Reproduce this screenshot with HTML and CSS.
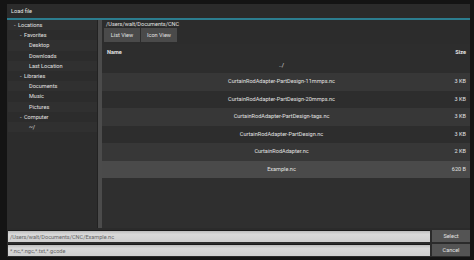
FILE: index.html
```html
<!DOCTYPE html>
<html>
<head>
<meta charset="utf-8">
<link rel="stylesheet" href="styles.css">
</head>
<body>
<div class="dialog">
  <div class="title">Load file</div>
  <div class="rule"></div>
  <div class="main">
    <div class="tree">
      <div class="node l0 odd"><span class="tog">-</span>Locations</div>
      <div class="node l1"><span class="tog">-</span>Favorites</div>
      <div class="node l2 odd">Desktop</div>
      <div class="node l2">Downloads</div>
      <div class="node l2 odd">Last Location</div>
      <div class="node l1"><span class="tog">-</span>Libraries</div>
      <div class="node l2 odd">Documents</div>
      <div class="node l2">Music</div>
      <div class="node l2 odd">Pictures</div>
      <div class="node l1"><span class="tog">-</span>Computer</div>
      <div class="node l2 odd">~/</div>
    </div>
    <div class="splitter"><div class="grip"></div></div>
    <div class="files">
      <div class="path">/Users/walt/Documents/CNC</div>
      <div class="toolbar">
        <div class="tab">List View</div>
        <div class="tab">Icon View</div>
      </div>
      <div class="list">
        <div class="hdr"><span class="name">Name</span><span class="size">Size</span></div>
        <div class="row up"><span class="fname">../</span><span class="fsize"></span></div>
        <div class="row light"><span class="fname">CurtainRodAdapter-PartDesign-11mmps.nc</span><span class="fsize"><span>3 KB</span></span></div>
        <div class="row dark"><span class="fname">CurtainRodAdapter-PartDesign-20mmps.nc</span><span class="fsize"><span>3 KB</span></span></div>
        <div class="row light"><span class="fname">CurtainRodAdapter-PartDesign-tags.nc</span><span class="fsize"><span>3 KB</span></span></div>
        <div class="row dark"><span class="fname">CurtainRodAdapter-PartDesign.nc</span><span class="fsize"><span>3 KB</span></span></div>
        <div class="row light"><span class="fname">CurtainRodAdapter.nc</span><span class="fsize"><span>2 KB</span></span></div>
        <div class="row sel"><span class="fname">Example.nc</span><span class="fsize"><span>620 B</span></span></div>
      </div>
    </div>
  </div>
  <div class="bottom">
    <div class="line">
      <div class="input">/Users/walt/Documents/CNC/Example.nc</div>
      <div class="btn">Select</div>
    </div>
    <div class="line">
      <div class="input">*.nc,*.ngc,*.txt,*.gcode</div>
      <div class="btn">Cancel</div>
    </div>
  </div>
</div>
</body>
</html>
```

FILE: styles.css
```css
html, body {
  margin: 0;
  padding: 0;
}
body {
  width: 474px;
  height: 260px;
  background: #141414;
  font-family: Roboto, "Liberation Sans", sans-serif;
  font-size: 5.55px;
  color: #e2e2e2;
  overflow: hidden;
}
.dialog {
  margin: 4px 4px 0 7px;
  height: 253px;
  background: #2b2b2b;
  display: flex;
  flex-direction: column;
}
.title {
  height: 14px;
  line-height: 15px;
  padding-left: 4px;
  color: #e8e8e8;
}
.rule {
  height: 2px;
  background: #2c7d8f;
}
.main {
  height: 208px;
  display: flex;
}
.tree {
  width: 89px;
  background: #2c2c2c;
  padding-left: 1px;
}
.node {
  height: 10.2px;
  line-height: 10.2px;
  white-space: nowrap;
}
.node.odd {
  background: #303030;
}
.tog {
  display: inline-block;
  width: 4px;
}
.l0 { padding-left: 6px; }
.l1 { padding-left: 12px; }
.l2 { padding-left: 21px; }
.splitter {
  width: 5px;
  background: #222;
  display: flex;
  justify-content: flex-end;
}
.grip {
  width: 4px;
  background: #4b4b4b;
}
.files {
  flex: 1;
  display: flex;
  flex-direction: column;
  background: #2c2c2c;
}
.path {
  height: 8px;
  line-height: 9px;
  padding-left: 4px;
}
.toolbar {
  display: flex;
  gap: 1px;
  padding-left: 2px;
  height: 14px;
}
.tab {
  background: #4a4a4a;
  width: 36px;
  line-height: 14px;
  text-align: center;
  color: #e0e0e0;
}
.list {
  margin-top: 2px;
  flex: 1;
  background: #2f2f2f;
}
.hdr {
  height: 14px;
  line-height: 16px;
  display: flex;
  justify-content: space-between;
  padding: 0 4px 0 5px;
  font-weight: bold;
  background: #2d2d2d;
}
.row {
  height: 17.5px;
  line-height: 17.5px;
  display: flex;
  padding-right: 4px;
  white-space: nowrap;
}
.row.up { height: 15px; line-height: 15px; background: #2d2d2d; }
.row.dark { background: #2d2d2d; }
.row.light { background: #373737; }
.row.sel { background: #4a4a4a; }
.fname {
  flex: 1;
  text-align: center;
  padding-right: 5px;
}
.fsize {
  width: 0;
  display: flex;
  justify-content: flex-end;
}
.bottom {
  display: flex;
  flex-direction: column;
  gap: 2px;
  padding-top: 2px;
  padding-left: 1px;
}
.line {
  display: flex;
  gap: 2px;
  height: 12px;
}
.input {
  width: 422px;
  background: linear-gradient(#bdbdbd, #d9d9d9 30%, #cfcfcf);
  color: #666;
  line-height: 12px;
  padding-left: 2px;
  box-sizing: border-box;
  border-top: 1px solid #1a1a1a;
}
.btn {
  flex: 1;
  background: #545454;
  color: #e4e4e4;
  text-align: center;
  line-height: 12px;
}
```
